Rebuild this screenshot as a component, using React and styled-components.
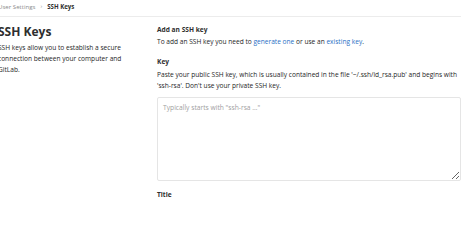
import React from "react";
import styled, { createGlobalStyle } from "styled-components";

const Global = createGlobalStyle`
  html, body { margin: 0; padding: 0; background: #fff; overflow: hidden; }
  body { font-family: "Open Sans", "DejaVu Sans", sans-serif; color: #2e2e2e; }
`;

const Page = styled.div`
  width: 463px;
  margin-left: -2px;
`;

const Breadcrumb = styled.nav`
  display: flex;
  align-items: center;
  gap: 5px;
  height: 12px;
  padding-bottom: 4px;
  border-bottom: 1px solid #ececec;
  font-size: 6.1px;
  color: #8c8c8c;
`;

const Sep = styled.span`
  font-size: 6px;
  color: #999;
`;

const Current = styled.span`
  color: #2e2e2e;
  font-weight: 700;
`;

const Row = styled.div`
  display: grid;
  grid-template-columns: 159px 1fr;
`;

const Left = styled.div`
  padding-top: 8px;
`;

const H3 = styled.h3`
  margin: 0 0 3px;
  font-size: 12px;
  font-weight: 700;
  line-height: 14px;
`;

const Desc = styled.p`
  margin: 0;
  font-size: 6.6px;
  line-height: 11px;
  width: 128px;
  color: #262626;
`;

const Right = styled.div`
  padding-top: 7px;
`;

const Label = styled.div`
  font-size: 6.6px;
  font-weight: 700;
  line-height: 11px;
  margin-bottom: ${(p) => p.$mb ?? 2}px;
`;

const Text = styled.p`
  margin: 0 0 ${(p) => p.$mb || 0}px;
  font-size: 6.6px;
  line-height: 11px;
  color: #262626;
`;

const Link = styled.a`
  color: #1f6fc5;
  text-decoration: none;
`;

const TextArea = styled.textarea`
  display: block;
  box-sizing: border-box;
  width: 304px;
  height: 84px;
  margin: 6px 0 8px;
  padding: 5px 5px;
  border: 1px solid #e5e5e5;
  border-radius: 2px;
  font-family: inherit;
  font-size: 6.7px;
  color: #2e2e2e;
  resize: vertical;
  &::placeholder { color: #a0a0a0; }
`;

export default function App() {
  return (
    <>
      <Global />
      <Page>
        <Breadcrumb>
          <span>User Settings</span>
          <Sep>›</Sep>
          <Current>SSH Keys</Current>
        </Breadcrumb>
        <Row>
          <Left>
            <H3>SSH Keys</H3>
            <Desc>
              SSH keys allow you to establish a secure connection between your
              computer and GitLab.
            </Desc>
          </Left>
          <Right>
            <Label $mb={1}>Add an SSH key</Label>
            <Text $mb={9}>
              To add an SSH key you need to <Link href="#">generate one</Link> or
              use an <Link href="#">existing key</Link>.
            </Text>
            <Label>Key</Label>
            <Text>
              Paste your public SSH key, which is usually contained in the file
              '~/.ssh/id_rsa.pub' and begins with 'ssh-rsa'. Don't use your
              private SSH key.
            </Text>
            <TextArea placeholder={'Typically starts with "ssh-rsa …"'} />
            <Label>Title</Label>
          </Right>
        </Row>
      </Page>
    </>
  );
}
